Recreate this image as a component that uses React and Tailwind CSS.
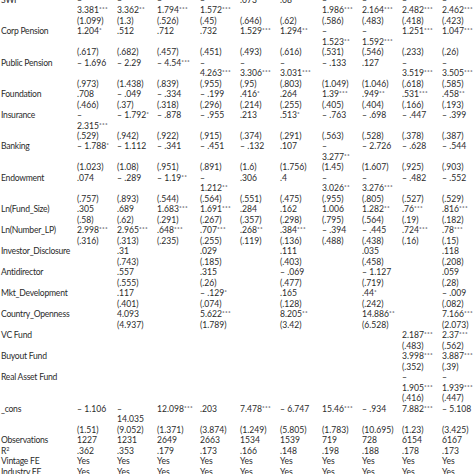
import React from 'react';

// regression table, one entry per printed line (label + 10 model columns)
const lines = [
  ['SWF', '–', '–', '–', '–', '.073', '.08', '–', '–', '–', '–'],
  ['', '3.381***', '3.362**', '1.794***', '1.572***', '', '', '1.986***', '2.164***', '2.482***', '2.462***'],
  ['', '(1.099)', '(1.3)', '(.526)', '(.45)', '(.646)', '(.62)', '(.586)', '(.483)', '(.418)', '(.423)'],
  ['Corp Pension', '1.204*', '.512', '.712', '.732', '1.529***', '1.294**', '–', '–', '1.251***', '1.047***'],
  ['', '', '', '', '', '', '', '1.523**', '1.592***', '', ''],
  ['', '(.617)', '(.682)', '(.457)', '(.451)', '(.493)', '(.616)', '(.531)', '(.546)', '(.233)', '(.26)'],
  ['Public Pension', '– 1.696', '– 2.29', '– 4.54***', '–', '–', '–', '– .133', '.127', '–', '–'],
  ['', '', '', '', '4.263***', '3.306***', '3.031***', '', '', '3.519***', '3.505***'],
  ['', '(.973)', '(1.438)', '(.839)', '(.955)', '(.95)', '(.803)', '(1.049)', '(1.046)', '(.618)', '(.585)'],
  ['Foundation', '.708', '– .049', '– .334', '– .199', '.416*', '.264', '1.39***', '.949**', '.531***', '.458**'],
  ['', '(.466)', '(.37)', '(.318)', '(.296)', '(.214)', '(.255)', '(.405)', '(.404)', '(.166)', '(.193)'],
  ['Insurance', '–', '– 1.792*', '– .878', '– .955', '.213', '.513*', '– .763', '– .698', '– .447', '– .399'],
  ['', '2.315***', '', '', '', '', '', '', '', '', ''],
  ['', '(.529)', '(.942)', '(.922)', '(.915)', '(.374)', '(.291)', '(.563)', '(.528)', '(.378)', '(.387)'],
  ['Banking', '– 1.788*', '– 1.112', '– .341', '– .451', '– .132', '.107', '–', '– 2.726', '– .628', '– .544'],
  ['', '', '', '', '', '', '', '3.277**', '', '', ''],
  ['', '(1.023)', '(1.08)', '(.951)', '(.891)', '(1.6)', '(1.756)', '(1.45)', '(1.607)', '(.925)', '(.903)'],
  ['Endowment', '.074', '– .289', '– 1.19**', '–', '.306', '.4', '–', '–', '– .482', '– .552'],
  ['', '', '', '', '1.212**', '', '', '3.026**', '3.276***', '', ''],
  ['', '(.757)', '(.893)', '(.544)', '(.564)', '(.551)', '(.475)', '(.955)', '(.805)', '(.527)', '(.529)'],
  ['Ln(Fund_Size)', '.305', '.689', '1.683***', '1.691***', '.284', '.162', '1.006', '1.282**', '.76***', '.816***'],
  ['', '(.58)', '(.62)', '(.291)', '(.267)', '(.357)', '(.298)', '(.795)', '(.564)', '(.19)', '(.182)'],
  ['Ln(Number_LP)', '2.998***', '2.965***', '.648***', '.707***', '.268**', '.384***', '– .394', '– .445', '.724***', '.78***'],
  ['', '(.316)', '(.313)', '(.235)', '(.255)', '(.119)', '(.136)', '(.488)', '(.438)', '(.16)', '(.15)'],
  ['Investor_Disclosure', '', '.31', '', '.029', '', '.111', '', '.035', '', '.118'],
  ['', '', '(.743)', '', '(.185)', '', '(.403)', '', '(.458)', '', '(.208)'],
  ['Antidirector', '', '.557', '', '.315', '', '– .069', '', '– 1.127', '', '.059'],
  ['', '', '(.555)', '', '(.26)', '', '(.477)', '', '(.719)', '', '(.28)'],
  ['Mkt_Development', '', '.117', '', '– .129*', '', '.165', '', '.44*', '', '– .009'],
  ['', '', '(.401)', '', '(.074)', '', '(.128)', '', '(.242)', '', '(.082)'],
  ['Country_Openness', '', '4.093', '', '5.622***', '', '8.205**', '', '14.886**', '', '7.166***'],
  ['', '', '(4.937)', '', '(1.789)', '', '(3.42)', '', '(6.528)', '', '(2.073)'],
  ['VC Fund', '', '', '', '', '', '', '', '', '2.187***', '2.37***'],
  ['', '', '', '', '', '', '', '', '', '(.483)', '(.562)'],
  ['Buyout Fund', '', '', '', '', '', '', '', '', '3.998***', '3.887***'],
  ['', '', '', '', '', '', '', '', '', '(.352)', '(.39)'],
  ['Real Asset Fund', '', '', '', '', '', '', '', '', '–', '–'],
  ['', '', '', '', '', '', '', '', '', '1.905***', '1.939***'],
  ['', '', '', '', '', '', '', '', '', '(.416)', '(.447)'],
  ['_cons', '– 1.106', '–', '12.098***', '.203', '7.478***', '– 6.747', '15.46***', '– .934', '7.882***', '– 5.108'],
  ['', '', '14.035', '', '', '', '', '', '', '', ''],
  ['', '(1.51)', '(9.052)', '(1.371)', '(3.874)', '(1.249)', '(5.805)', '(1.783)', '(10.695)', '(1.23)', '(3.425)'],
  ['Observations', '1227', '1231', '2649', '2663', '1534', '1539', '719', '728', '6154', '6167'],
  ['R2', '.362', '.353', '.179', '.173', '.166', '.148', '.198', '.188', '.178', '.173'],
  ['Vintage FE', 'Yes', 'Yes', 'Yes', 'Yes', 'Yes', 'Yes', 'Yes', 'Yes', 'Yes', 'Yes'],
  ['Industry FE', 'Yes', 'Yes', 'Yes', 'Yes', 'Yes', 'Yes', 'Yes', 'Yes', 'Yes', 'Yes'],
];

const Cell = ({ text }) => {
  const m = text.match(/^(.*?)(\*+)$/);
  if (!m) return <span>{text}</span>;
  return (
    <span>
      {m[1]}
      <span className="relative -top-[2px] text-[6.5px] tracking-[0.2px]">{m[2]}</span>
    </span>
  );
};

const Label = ({ text }) => {
  if (text === 'R2') {
    return (
      <span>
        R<span className="relative -top-[2.5px] text-[5.5px]">2</span>
      </span>
    );
  }
  return <span>{text}</span>;
};

export default function App() {
  return (
    <div
      className="w-[474px] h-[474px] overflow-hidden bg-white text-[#2b2b2b] text-[8.6px]"
      style={{ fontFamily: 'Lato, "Open Sans", sans-serif' }}
    >
      <div className="-mt-[5.3px]">
        {lines.map((row, i) => (
          <div
            key={i}
            className="grid grid-cols-[77px_40px_40px_43px_40px_40px_42px_40px_40px_40px_40px] h-[10.49px] leading-[10.49px] whitespace-nowrap"
          >
            <div className="pl-[1px] tracking-[-0.25px]">
              <Label text={row[0]} />
            </div>
            {row.slice(1).map((c, j) => (
              <div key={j}>{c && <Cell text={c} />}</div>
            ))}
          </div>
        ))}
      </div>
    </div>
  );
}
